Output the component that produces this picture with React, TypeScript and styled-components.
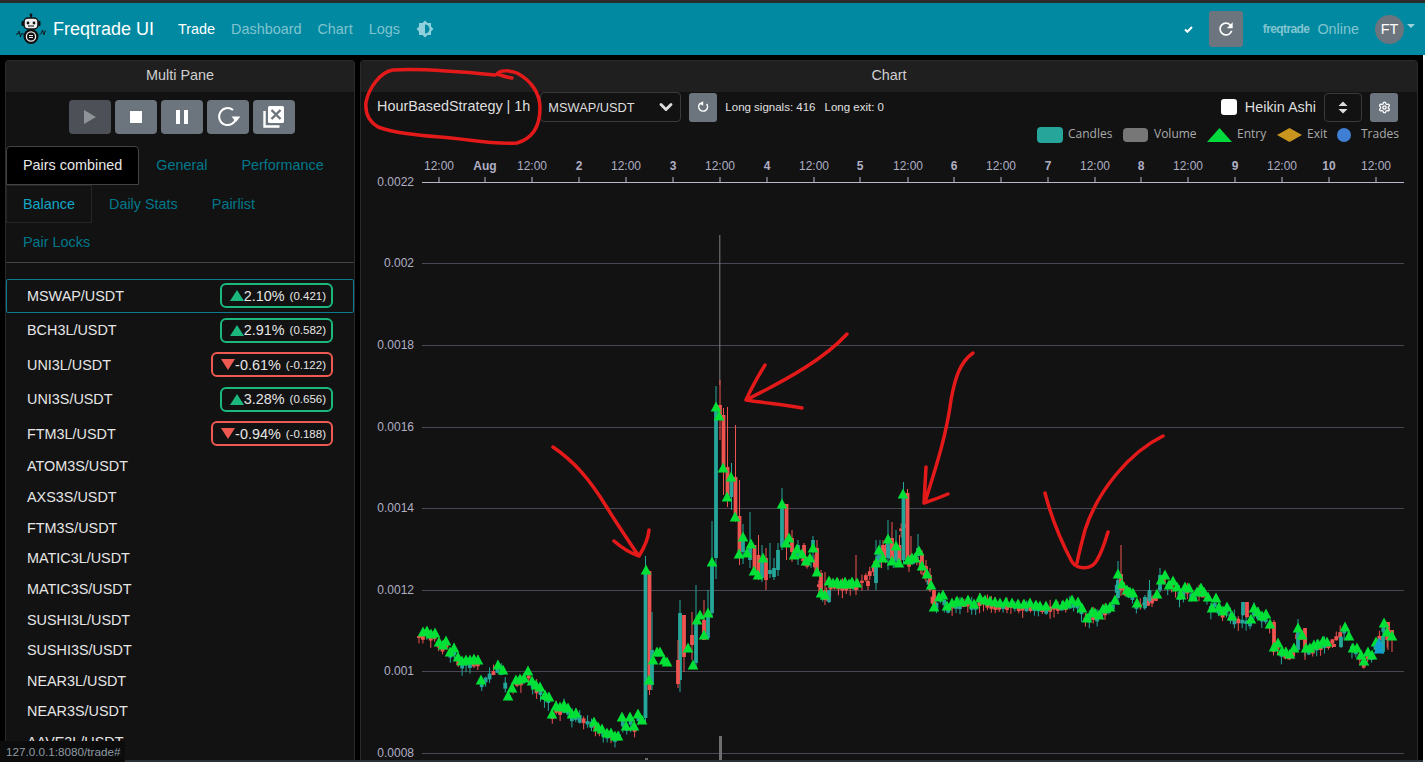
import styled, { createGlobalStyle } from "styled-components";
import { ChevronDown, Settings } from "lucide-react";
import { MdBrightness6, MdRefresh } from "react-icons/md";

const pairs = [
  { name: "MSWAP/USDT", pct: "2.10%", val: "(0.421)", up: true, active: true },
  { name: "BCH3L/USDT", pct: "2.91%", val: "(0.582)", up: true },
  { name: "UNI3L/USDT", pct: "-0.61%", val: "(-0.122)", up: false },
  { name: "UNI3S/USDT", pct: "3.28%", val: "(0.656)", up: true },
  { name: "FTM3L/USDT", pct: "-0.94%", val: "(-0.188)", up: false },
  { name: "ATOM3S/USDT" },
  { name: "AXS3S/USDT" },
  { name: "FTM3S/USDT" },
  { name: "MATIC3L/USDT" },
  { name: "MATIC3S/USDT" },
  { name: "SUSHI3L/USDT" },
  { name: "SUSHI3S/USDT" },
  { name: "NEAR3L/USDT" },
  { name: "NEAR3S/USDT" },
  { name: "AAVE3L/USDT" },
];

const yTicks = [
  { label: "0.0022", y: 182 },
  { label: "0.002", y: 263 },
  { label: "0.0018", y: 345 },
  { label: "0.0016", y: 427 },
  { label: "0.0014", y: 508 },
  { label: "0.0012", y: 590 },
  { label: "0.001", y: 671 },
  { label: "0.0008", y: 753 },
];

const xTicks = [
  ["12:00", 439], ["Aug", 485, 1], ["12:00", 532], ["2", 579, 1], ["12:00", 626], ["3", 673, 1],
  ["12:00", 720], ["4", 767, 1], ["12:00", 814], ["5", 860, 1], ["12:00", 908], ["6", 954, 1],
  ["12:00", 1001], ["7", 1048, 1], ["12:00", 1095], ["8", 1141, 1], ["12:00", 1188], ["9", 1235, 1],
  ["12:00", 1282], ["10", 1329, 1], ["12:00", 1376],
] as [string, number, number?][];

// entry markers, in page pixels
const entries: [number, number][] = [
  [423, 632], [427, 631], [431, 634], [435, 633], [439, 642], [443, 645], [446, 641], [450, 652], [454, 648], [458, 657],
  [462, 661], [466, 660], [470, 660], [474, 659], [478, 660], [481, 680], [498, 665], [503, 670], [508, 696], [512, 688],
  [516, 680], [520, 679], [524, 678], [528, 671], [532, 681], [536, 685], [540, 687], [545, 695], [549, 697], [552, 714],
  [556, 706], [560, 707], [564, 705], [568, 708], [572, 714], [576, 713], [594, 722], [598, 727], [602, 729], [607, 733],
  [611, 733], [615, 736], [618, 736], [622, 717], [626, 726], [630, 717], [634, 726], [638, 714], [642, 720], [646, 570],
  [649, 680], [653, 660], [657, 652], [660, 652], [664, 660], [667, 662], [688, 648], [693, 665], [697, 620], [700, 615],
  [704, 635], [708, 613], [712, 562], [716, 407], [719, 416], [723, 468], [727, 497], [731, 477], [735, 517], [739, 554],
  [743, 537], [747, 553], [751, 544], [754, 571], [758, 575], [763, 558], [782, 504], [786, 543], [789, 538], [794, 555],
  [797, 549], [802, 554], [806, 561], [810, 558], [813, 548], [817, 572], [821, 593], [825, 595], [829, 581], [833, 583],
  [837, 582], [841, 584], [845, 582], [849, 584], [852, 582], [857, 583], [876, 563], [879, 550], [883, 558], [888, 539],
  [892, 561], [896, 546], [899, 563], [903, 494], [908, 560], [912, 558], [915, 558], [919, 551], [922, 566], [927, 574],
  [931, 585], [934, 607], [939, 597], [943, 595], [947, 606], [952, 603], [957, 601], [962, 602], [968, 600], [974, 604],
  [980, 598], [985, 600], [990, 601], [995, 602], [1000, 603], [1006, 602], [1012, 603], [1018, 604], [1024, 604], [1030, 603],
  [1036, 605], [1040, 606], [1046, 606], [1056, 604], [1063, 605], [1067, 603], [1072, 600], [1078, 602], [1082, 608], [1087, 618],
  [1092, 612], [1095, 613], [1099, 615], [1103, 609], [1106, 608], [1110, 607], [1115, 600], [1118, 574], [1122, 584], [1127, 590],
  [1130, 592], [1133, 593], [1137, 603], [1157, 594], [1161, 580], [1165, 575], [1169, 585], [1173, 581], [1177, 587], [1181, 595],
  [1185, 587], [1189, 588], [1193, 597], [1197, 592], [1201, 588], [1204, 592], [1208, 597], [1212, 608], [1216, 598], [1219, 607],
  [1223, 611], [1227, 607], [1232, 616], [1251, 619], [1254, 608], [1258, 612], [1262, 616], [1266, 614], [1270, 624], [1274, 647],
  [1278, 643], [1282, 651], [1286, 652], [1290, 654], [1294, 648], [1298, 628], [1302, 635], [1306, 648], [1310, 648], [1314, 645],
  [1318, 644], [1323, 641], [1327, 642], [1345, 627], [1349, 636], [1353, 648], [1357, 648], [1361, 655], [1364, 661], [1368, 652],
  [1372, 655], [1376, 642], [1384, 623], [1387, 632], [1392, 636],
];

// the tall candles that stand out of the series: x, body top, body bottom, wick top, wick bottom, rising
const bigCandles: [number, number, number, number, number, boolean][] = [
  [645.5, 570, 718, 556, 722, true], [649.5, 571, 690, 571, 695, false], [652, 650, 685, 612, 690, true],
  [680, 613, 680, 600, 692, true], [684, 615, 657, 615, 672, false], [678, 660, 684, 640, 688, false],
  [696, 623, 663, 585, 668, true], [692, 635, 645, 612, 660, false], [704, 620, 640, 600, 640, false],
  [708, 613, 638, 590, 640, true], [712, 565, 613, 521, 618, true], [716, 408, 558, 386, 579, true],
  [720, 405, 420, 380, 440, false], [723.5, 415, 467, 408, 495, false], [727.5, 467, 497, 407, 507, false],
  [731.5, 480, 497, 463, 510, true], [735.5, 477, 517, 425, 522, false], [739.5, 516, 553, 480, 565, false],
  [743, 540, 552, 524, 564, true], [750, 545, 560, 512, 568, true], [754.5, 545, 575, 545, 574, false],
  [758.5, 555, 578, 535, 580, false], [762, 562, 578, 545, 582, true], [766, 558, 580, 548, 590, false],
  [770, 570, 574, 543, 578, true], [774, 568, 577, 558, 580, true], [778, 550, 570, 543, 576, true],
  [782, 508, 547, 488, 550, true], [786.5, 504, 543, 504, 560, false], [792, 538, 552, 530, 562, false],
  [798, 545, 556, 540, 565, true], [804, 545, 560, 543, 566, false], [813, 540, 552, 536, 560, true],
  [817, 548, 570, 540, 575, false], [821, 573, 590, 570, 595, false], [825, 590, 600, 572, 605, false],
  [829, 590, 602, 590, 603, true], [856, 585, 590, 555, 595, false], [868, 581, 586, 580, 590, false],
  [876, 563, 583, 540, 590, true], [880, 548, 560, 540, 566, true], [883, 545, 555, 540, 558, false],
  [888, 542, 558, 520, 570, true], [892, 538, 560, 522, 565, false], [896, 545, 560, 530, 566, true],
  [899.5, 545, 562, 535, 566, false], [903.5, 498, 560, 482, 564, true], [907.5, 493, 560, 489, 564, false],
  [911, 555, 560, 536, 562, false], [918, 548, 556, 534, 558, true], [922, 554, 570, 550, 575, false],
  [926, 566, 575, 560, 582, false], [930, 575, 590, 568, 592, false], [934, 590, 605, 588, 610, false],
  [1118, 580, 598, 561, 605, true], [1121, 574, 590, 545, 596, false], [1145, 597, 608, 595, 610, true],
  [1149.5, 590, 601, 580, 603, true], [1160, 575, 590, 568, 592, true], [1243, 602, 615, 602, 616, true],
  [1247, 602, 617, 602, 618, false], [1274, 622, 647, 620, 648, false], [1298, 632, 650, 619, 652, true],
  [1305, 628, 650, 628, 660, false], [1341, 637, 647, 636, 648, true], [1334, 644, 647, 644, 647, false],
  [1383, 636, 652, 625, 654, true], [1388, 622, 640, 622, 650, false], [1392, 630, 640, 630, 652, false],
];

const hash = (i: number) => {
  const s = Math.sin(i * 12.9898) * 43758.5453;
  return s - Math.floor(s);
};

const priceAt = (x: number) => {
  for (let i = 1; i < entries.length; i++) {
    if (x <= entries[i][0]) {
      const [x0, y0] = entries[i - 1];
      const [x1, y1] = entries[i];
      return y0 + ((x - x0) / (x1 - x0 || 1)) * (y1 - y0);
    }
  }
  return entries[entries.length - 1][1];
};

// the small candles along the series
const smallCandles = Array.from({ length: 248 }, (_, i) => {
  const x = 419 + i * 3.92;
  const mid = priceAt(x) + 4;
  const h = 2 + hash(i) * 6;
  return {
    x,
    top: mid - h / 2,
    bottom: mid + h / 2,
    wickTop: mid - h / 2 - hash(i + 300) * 7,
    wickBottom: mid + h / 2 + hash(i + 600) * 8,
    up: hash(i + 900) > 0.55,
  };
}).filter((c) => c.x < 642 || (c.x > 800 && c.x < 1393));

const TEAL = "#26a69a";
const RED = "#ef5350";

const Candle = ({ x, top, bottom, wickTop, wickBottom, up }: { x: number; top: number; bottom: number; wickTop: number; wickBottom: number; up: boolean }) => (
  <g fill={up ? TEAL : RED} stroke="none">
    <rect x={x - 0.5} y={wickTop} width={1} height={wickBottom - wickTop} />
    <rect x={x - 1.9} y={top} width={3.8} height={bottom - top} />
  </g>
);

const Triangle = ({ x, y, color }: { x: number; y: number; color: string }) => (
  <polygon points={`${x},${y - 5.5} ${x + 5.3},${y + 4.5} ${x - 5.3},${y + 4.5}`} fill={color} />
);

const Chart = () => (
  <ChartSvg viewBox="361 122 1056 640">
    <g fontFamily="'Open Sans', 'Liberation Sans', sans-serif" fontSize="12" fill="#aaaaaa">
      <rect x={1037} y={127} width={26} height={16} rx={4} fill={TEAL} />
      <text x={1068} y={138}>Candles</text>
      <rect x={1123} y={128} width={25} height={14} rx={4} fill="#777777" />
      <text x={1154} y={138}>Volume</text>
      <polygon points="1219.5,128 1232,142 1207,142" fill="#00da3c" />
      <text x={1237} y={138}>Entry</text>
      <polygon points="1289.5,128 1302,135 1289.5,142 1277,135" fill="#c9951f" />
      <text x={1307} y={138}>Exit</text>
      <circle cx={1344} cy={135} r={7} fill="#3f7fd3" />
      <text x={1361} y={138}>Trades</text>
    </g>
    <g fontFamily="'Liberation Sans', sans-serif" fontSize="12" fill="#b0afc4">
      {xTicks.map(([label, x, bold]) => (
        <g key={`${label}-${x}`}>
          <text x={x} y={170} textAnchor="middle" fontWeight={bold ? 700 : 400}>{label}</text>
          <line x1={x} x2={x} y1={177} y2={182} stroke="#b9b8ce" />
        </g>
      ))}
      {yTicks.map((t) => (
        <g key={t.label}>
          <text x={414} y={t.y + 4} textAnchor="end">{t.label}</text>
          <line x1={422} x2={1404} y1={t.y + 0.5} y2={t.y + 0.5} stroke={t.y === 182 ? "#b9b8ce" : "#484753"} />
        </g>
      ))}
    </g>
    <rect x={719.3} y={235} width={1} height={150} fill="#7d7d7d" />
    {smallCandles.map((c) => (
      <Candle key={c.x} x={c.x} top={c.top} bottom={c.bottom} wickTop={c.wickTop} wickBottom={c.wickBottom} up={c.up} />
    ))}
    {bigCandles.map(([x, top, bottom, wickTop, wickBottom, up]) => (
      <Candle key={x} x={x} top={top} bottom={bottom} wickTop={wickTop} wickBottom={wickBottom} up={up} />
    ))}
    {entries.map(([x, y]) => (
      <Triangle key={`${x}-${y}`} x={x} y={y} color="#00e036" />
    ))}
    <Triangle x={1379} y={643} color="#0f9fd0" />
    <Triangle x={1379} y={649} color="#0f9fd0" />
    <rect x={719} y={736} width={3} height={26} fill="#6e6e6e" />
    <rect x={645} y={758} width={3} height={4} fill="#6e6e6e" />
  </ChartSvg>
);

const Logo = () => (
  <svg width="30" height="32" viewBox="0 0 30 32" fill="none">
    <line x1="15" y1="1" x2="15" y2="6" stroke="#111" strokeWidth="1.5" />
    <circle cx="15" cy="2" r="1.4" fill="#111" />
    <rect x="8" y="5" width="14" height="11" rx="4" fill="#eee" stroke="#111" strokeWidth="1.5" />
    <rect x="5.5" y="8" width="2.5" height="5" rx="1" fill="#111" />
    <rect x="22" y="8" width="2.5" height="5" rx="1" fill="#111" />
    <circle cx="12" cy="10" r="1.4" fill="#111" />
    <circle cx="18" cy="10" r="1.4" fill="#111" />
    <path d="M12 13h6" stroke="#111" strokeWidth="1" />
    <circle cx="15" cy="23.5" r="7.5" fill="#111" />
    <circle cx="15" cy="23.5" r="4.6" stroke="#eee" strokeWidth="1.3" />
    <path d="M13 22.5h4M13 24.5h4" stroke="#eee" strokeWidth="1" />
    <path d="M0 21h2l1-3 1.5 6 1-4 1 1h1.5M30 18h-1l-1 4-1.5-5-1 3-1 1h-1" stroke="#111" strokeWidth="0.9" />
  </svg>
);

const CheckIcon = () => (
  <svg width="9" height="7" viewBox="0 0 9 7" fill="none">
    <path d="M1 3.6l2.4 2.2L8 1" stroke="#fff" strokeWidth="2" />
  </svg>
);

const ForceExitIcon = () => (
  <svg width="22" height="24" viewBox="0 0 22 24" fill="none">
    <path d="M1.5 6v15.5h15" stroke="#fff" strokeWidth="2.4" />
    <rect x="5" y="1" width="16" height="17" rx="1.5" fill="#fff" />
    <path d="M8.5 5l9 9M17.5 5l-9 9" stroke="#6c757d" strokeWidth="2.4" />
  </svg>
);

const ReloadIcon = () => (
  <svg width="24" height="24" viewBox="0 0 24 24" fill="none">
    <path d="M20 13a8.5 8.5 0 1 1-3-8" stroke="#fff" strokeWidth="2" />
    <path d="M15.5 11.5h9l-4.5 5.5z" fill="#fff" />
  </svg>
);

const UpDownIcon = () => (
  <svg width="10" height="13" viewBox="0 0 10 13">
    <path d="M5 0.5L9.5 5h-9zM5 12.5L0.5 8h9z" fill="#ddd" />
  </svg>
);

const SmallReload = () => (
  <svg width="12" height="12" viewBox="0 0 12 12" fill="none">
    <path d="M3 2.6A4.4 4.4 0 1 0 9.6 3" stroke="#fff" strokeWidth="1.5" />
    <path d="M6.2 0.2v4.6L2 2.5z" fill="#fff" />
  </svg>
);

const Annotations = () => (
  <AnnotationLayer viewBox="0 0 1425 762">
    <path d="M512 78C505 77 500 75 497 74C499 70 510 70 517 73C530 80 540 92 540 108C540 125 534 138 517 143C490 145 470 139 440 137C415 135 395 133 378 127C368 121 365 112 366 102C369 88 380 72 393 70C420 68 465 72 495 75" />
    <path d="M553 447C575 462 590 480 606 506C617 524 628 540 638 555M614 541C622 548 630 553 639 556C644 548 648 540 649 530" />
    <path d="M847 334C825 358 790 378 746 400M765 365C757 378 751 389 746 400C765 403 785 405 802 408" />
    <path d="M973 353C960 362 955 378 951 400C947 430 940 455 925 502M926 467L924 503C933 500 941 497 948 494" />
    <path d="M1045 493C1052 520 1063 545 1072 562C1078 570 1092 570 1097 560C1102 552 1105 542 1108 532" />
    <path d="M1163 436C1130 452 1098 490 1085 530C1082 542 1079 552 1077 563" />
  </AnnotationLayer>
);

export default function App() {
  return (
    <Page>
      <GlobalStyle />
      <TopStrip />
      <Navbar>
        <Brand>
          <Logo />
          <BrandName>Freqtrade UI</BrandName>
        </Brand>
        <NavLinks>
          <NavLink $active>Trade</NavLink>
          <NavLink>Dashboard</NavLink>
          <NavLink>Chart</NavLink>
          <NavLink>Logs</NavLink>
          <ThemeToggle><MdBrightness6 size={18} /></ThemeToggle>
        </NavLinks>
        <NavRight>
          <CheckIcon />
          <NavReload><MdRefresh size={20} /></NavReload>
          <BotName>freqtrade</BotName>
          <BotStatus>Online</BotStatus>
          <Avatar>FT</Avatar>
          <Caret />
        </NavRight>
      </Navbar>
      <Main>
        <SidePanel>
          <PanelHeader>Multi Pane</PanelHeader>
          <PanelBody>
            <BotControls>
              <ControlButton $disabled>
                <svg width="14" height="16" viewBox="0 0 14 16"><path d="M1 1l12 7-12 7z" fill="#8f9499" /></svg>
              </ControlButton>
              <ControlButton>
                <svg width="12" height="12" viewBox="0 0 12 12"><rect width="12" height="12" fill="#fff" /></svg>
              </ControlButton>
              <ControlButton>
                <svg width="12" height="14" viewBox="0 0 12 14"><path d="M0 0h4v14H0zM8 0h4v14H8z" fill="#fff" /></svg>
              </ControlButton>
              <ControlButton><ReloadIcon /></ControlButton>
              <ControlButton><ForceExitIcon /></ControlButton>
            </BotControls>
            <Tabs>
              <Tab $variant="active">Pairs combined</Tab>
              <Tab>General</Tab>
              <Tab>Performance</Tab>
              <Tab $variant="hover">Balance</Tab>
              <Tab>Daily Stats</Tab>
              <Tab>Pairlist</Tab>
              <Tab>Pair Locks</Tab>
            </Tabs>
            <PairList>
              {pairs.map((p) => (
                <PairRow key={p.name} $active={p.active}>
                  <span>{p.name}</span>
                  {p.pct && (
                    <ProfitBadge $up={p.up}>
                      <Arrow $up={p.up} />
                      <span>{p.pct}</span>
                      <ProfitValue>{p.val}</ProfitValue>
                    </ProfitBadge>
                  )}
                </PairRow>
              ))}
            </PairList>
          </PanelBody>
        </SidePanel>
        <ChartPanel>
          <PanelHeader>Chart</PanelHeader>
          <PanelBody>
            <ChartToolbar>
              <ToolbarLeft>
                <StrategyName>HourBasedStrategy | 1h</StrategyName>
                <PairSelect>
                  MSWAP/USDT
                  <ChevronDown size={20} strokeWidth={3.5} color="#ddd" />
                </PairSelect>
                <SmallButton><SmallReload /></SmallButton>
                <Signals>
                  <span>Long signals: 416</span>
                  <span>Long exit: 0</span>
                </Signals>
              </ToolbarLeft>
              <ToolbarRight>
                <HeikinCheck />
                <HeikinLabel>Heikin Ashi</HeikinLabel>
                <PlotSelect><UpDownIcon /></PlotSelect>
                <SmallButton><Settings size={13} strokeWidth={2.5} /></SmallButton>
              </ToolbarRight>
            </ChartToolbar>
            <Chart />
          </PanelBody>
        </ChartPanel>
      </Main>
      <Annotations />
      <StatusTip>127.0.0.1:8080/trade#</StatusTip>
      <ScrollTrack />
    </Page>
  );
}

const GlobalStyle = createGlobalStyle`
  html, body {
    margin: 0;
    padding: 0;
    height: 100%;
    overflow: hidden;
    background: #fff;
  }
  * {
    box-sizing: border-box;
  }
`;

const Page = styled.div`
  position: relative;
  width: 1425px;
  height: 762px;
  display: flex;
  flex-direction: column;
  overflow: hidden;
  font-family: "Liberation Sans", Arial, sans-serif;
  font-size: 14.4px;
  color: #e0e0e0;
`;

const TopStrip = styled.div`
  height: 3px;
  background: #2b2b2b;
`;

const Navbar = styled.nav`
  height: 52px;
  flex: none;
  display: flex;
  align-items: center;
  background: #0089a1;
  padding-left: 16px;
`;

const Brand = styled.div`
  display: flex;
  align-items: center;
  gap: 7px;
  width: 146px;
`;

const BrandName = styled.span`
  font-size: 18px;
  color: #fff;
  white-space: nowrap;
`;

const NavLinks = styled.div`
  display: flex;
  align-items: center;
  gap: 16px;
  margin-left: 16px;
`;

const NavLink = styled.a<{ $active?: boolean }>`
  color: ${(p) => (p.$active ? "#fff" : "#80c4d0")};
  cursor: pointer;
`;

const ThemeToggle = styled.span`
  display: flex;
  color: #8fd0dc;
`;

const NavRight = styled.div`
  margin-left: auto;
  display: flex;
  align-items: center;
  height: 100%;
  padding-right: 10px;
`;

const NavReload = styled.button`
  width: 34px;
  height: 36px;
  margin-left: 16px;
  border: none;
  border-radius: 3px;
  background: #6c757d;
  color: #fff;
  display: flex;
  align-items: center;
  justify-content: center;
  padding: 0;
`;

const BotName = styled.span`
  margin-left: 20px;
  font-size: 12px;
  color: #80c4d0;
  font-weight: 700;
  letter-spacing: -0.6px;
`;

const BotStatus = styled.span`
  margin-left: 8px;
  font-size: 14.4px;
  color: #80c4d0;
`;

const Avatar = styled.div`
  width: 29px;
  height: 29px;
  margin-left: 16px;
  border-radius: 50%;
  background: #6c757d;
  color: #fff;
  font-size: 14.4px;
  display: flex;
  align-items: center;
  justify-content: center;
`;

const Caret = styled.span`
  margin: -6px 0 0 3px;
  border-top: 4.5px solid #9cd3dd;
  border-left: 4.5px solid transparent;
  border-right: 4.5px solid transparent;
`;

const Main = styled.main`
  flex: 1;
  min-height: 0;
  width: 1423px;
  display: flex;
  gap: 5px;
  padding: 5px 5px 0;
  background: #000;
`;

const Panel = styled.section`
  display: flex;
  flex-direction: column;
  min-height: 0;
  border: 1px solid #2a2a2a;
  border-bottom: none;
  border-radius: 4px 4px 0 0;
  background: #121212;
  overflow: hidden;
`;

const SidePanel = styled(Panel)`
  width: 350px;
  flex: none;
`;

const ChartPanel = styled(Panel)`
  flex: 1;
`;

const PanelHeader = styled.header`
  height: 31px;
  flex: none;
  display: flex;
  align-items: center;
  justify-content: center;
  padding-bottom: 3px;
  background: #1f1f1f;
  color: #cfcfcf;
  font-size: 14.4px;
`;

const PanelBody = styled.div`
  flex: 1;
  min-height: 0;
  display: flex;
  flex-direction: column;
  overflow: hidden;
`;

const BotControls = styled.div`
  display: flex;
  justify-content: center;
  gap: 4px;
  padding-top: 8px;
  padding-left: 4px;
`;

const ControlButton = styled.button<{ $disabled?: boolean }>`
  width: 42px;
  height: 34px;
  padding: 0;
  border: none;
  border-radius: 4px;
  background: ${(p) => (p.$disabled ? "#4d5157" : "#6c757d")};
  display: flex;
  align-items: center;
  justify-content: center;
`;

const Tabs = styled.div`
  display: flex;
  flex-wrap: wrap;
  margin-top: 12px;
  border-bottom: 1px solid #444;
`;

const Tab = styled.a<{ $variant?: "active" | "hover" }>`
  height: 38.5px;
  padding: 0 16px;
  display: flex;
  align-items: center;
  white-space: nowrap;
  color: ${(p) => (p.$variant === "active" ? "#e8e8e8" : p.$variant === "hover" ? "#12a5c6" : "#00788c")};
  background: ${(p) => (p.$variant === "active" ? "#000" : "transparent")};
  border: 1px solid ${(p) => (p.$variant === "active" ? "#444" : p.$variant === "hover" ? "#262626" : "transparent")};
  border-radius: ${(p) => (p.$variant === "active" ? "4px 4px 0 0" : "0")};
`;

const PairList = styled.div`
  padding-top: 16px;
`;

const PairRow = styled.div<{ $active?: boolean }>`
  display: flex;
  align-items: center;
  justify-content: space-between;
  padding: 3.75px 20px 3.75px 20px;
  border: 1px solid ${(p) => (p.$active ? "#0d7c90" : "transparent")};
  border-radius: 2px;
  min-height: 30.65px;
  color: #e6e6e6;
`;

const ProfitBadge = styled.div<{ $up?: boolean }>`
  height: 25px;
  display: flex;
  align-items: center;
  padding: 0 5px 0 8px;
  border: 2px solid ${(p) => (p.$up ? "#1bb77c" : "#ee5a52")};
  border-radius: 6px;
  font-size: 14.4px;
`;

const Arrow = styled.span<{ $up?: boolean }>`
  border-left: 7.5px solid transparent;
  border-right: 7.5px solid transparent;
  ${(p) => (p.$up ? "border-bottom: 11px solid #1bb77c;" : "border-top: 11px solid #ee5a52;")}
`;

const ProfitValue = styled.small`
  font-size: 11.5px;
  margin-left: 5px;
`;

const ChartToolbar = styled.div`
  height: 30px;
  flex: none;
  display: flex;
  justify-content: space-between;
`;

const ToolbarLeft = styled.div`
  display: flex;
  align-items: center;
  padding-left: 16px;
`;

const StrategyName = styled.span`
  font-size: 14.4px;
  color: #dedede;
  margin-top: -2px;
`;

const PairSelect = styled.div`
  width: 141px;
  height: 30px;
  margin-left: 10px;
  padding: 0 4px 0 7px;
  display: flex;
  align-items: center;
  justify-content: space-between;
  border: 1px solid #3a3a3a;
  border-radius: 4px;
  font-size: 12.8px;
  color: #dedede;
`;

const SmallButton = styled.button`
  width: 28px;
  height: 29px;
  padding: 0;
  margin-left: 8px;
  border: none;
  border-radius: 3px;
  background: #6c757d;
  color: #fff;
  display: flex;
  align-items: center;
  justify-content: center;
`;

const Signals = styled.div`
  display: flex;
  gap: 9px;
  margin-left: 8px;
  font-size: 11.5px;
  color: #e0e0e0;
`;

const ToolbarRight = styled.div`
  display: flex;
  align-items: center;
  padding-right: 19px;
`;

const HeikinCheck = styled.span`
  width: 16px;
  height: 16px;
  border-radius: 3px;
  background: #fff;
`;

const HeikinLabel = styled.span`
  margin-left: 8px;
  color: #dedede;
`;

const PlotSelect = styled.div`
  width: 38px;
  height: 29px;
  margin-left: 8px;
  border: 1px solid #3a3a3a;
  border-radius: 4px;
  display: flex;
  align-items: center;
  justify-content: center;
`;

const ChartSvg = styled.svg`
  flex: 1;
  min-height: 0;
  width: 100%;
  display: block;
`;

const AnnotationLayer = styled.svg`
  position: absolute;
  inset: 0;
  width: 1425px;
  height: 762px;
  pointer-events: none;
  fill: none;
  stroke: #e41a1a;
  stroke-width: 3.5;
  stroke-linecap: round;
  stroke-linejoin: round;
`;

const StatusTip = styled.div`
  position: absolute;
  left: 0;
  bottom: 0;
  width: 125px;
  height: 21px;
  display: flex;
  align-items: center;
  padding-left: 6px;
  background: #0c0c0c;
  color: #8f9ba3;
  font-size: 11.7px;
  white-space: nowrap;
`;

const ScrollTrack = styled.div`
  position: absolute;
  left: 125px;
  right: 2px;
  bottom: 0;
  height: 2px;
  background: #2a3238;
`;
